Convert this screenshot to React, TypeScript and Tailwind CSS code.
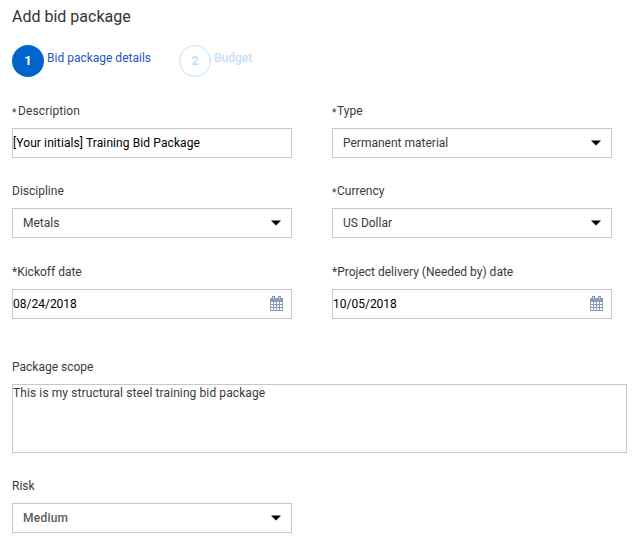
import React from 'react';

function Arrow() {
  return (
    <svg className="absolute right-[10px] top-[11px]" width="10" height="6" viewBox="0 0 10 6">
      <path d="M0 0.5h10L5 5.5z" fill="#000" />
    </svg>
  );
}

function Calendar() {
  return (
    <svg className="mb-px" width="13" height="15" viewBox="0 0 13 15" shapeRendering="crispEdges">
      <path d="M0 2h13v13h-13z" fill="#8b9dba" />
      <path d="M2 0h3v4h-3zM8 0h3v4h-3z" fill="#8b9dba" />
      <path d="M3 1h1v2h-1zM9 1h1v2h-1z" fill="#c9d2e1" />
      <path
        d="M1 6h2v2h-2zM4 6h2v2h-2zM7 6h2v2h-2zM10 6h2v2h-2zM1 9h2v2h-2zM4 9h2v2h-2zM7 9h2v2h-2zM10 9h2v2h-2zM1 12h2v2h-2zM4 12h2v2h-2zM7 12h2v2h-2zM10 12h2v2h-2z"
        fill="#fff"
      />
    </svg>
  );
}

function Label({ text, required }: { text: string; required?: boolean }) {
  return (
    <div className="flex h-[17px] text-[12px] leading-[17px] text-[#3b3b3b]">
      {required && <span className="w-[5px] pt-px text-[10px]">*</span>}
      <span>{text}</span>
    </div>
  );
}

function Select({ label, value, required, strong }: { label: string; value: string; required?: boolean; strong?: boolean }) {
  return (
    <div className="w-[280px] pt-px">
      <Label text={label} required={required} />
      <div className="relative mt-2 h-[30px] border border-[#c8c8c8] pl-[10px] text-[12px] leading-[28px] text-[#3b3b3b]">
        {strong ? <span className="font-medium tracking-[0.02em] text-[#5c5c5c]">{value}</span> : value}
        <Arrow />
      </div>
    </div>
  );
}

function DateField({ label, value }: { label: string; value: string }) {
  return (
    <div className="w-[280px] pt-[2px]">
      <div className="h-[17px] text-[12px] leading-[17px] text-[#3b3b3b]">*{label}</div>
      <div className="mt-2 flex h-[30px] items-center justify-between border border-[#c8c8c8] pr-[8px] text-[12px] text-black">
        <span>{value}</span>
        <Calendar />
      </div>
    </div>
  );
}

export default function App() {
  return (
    <main className="h-[544px] w-[638px] overflow-hidden bg-white pl-3 pt-[7px] font-[Roboto,sans-serif]">
      <h1 className="text-[16px] leading-[20px] text-[#333]">Add bid package</h1>

      {/* Wizard steps */}
      <div className="mt-[18px] flex h-8">
        <div className="flex h-8 w-8 items-center justify-center rounded-full bg-[#0066cc] text-[13px] font-bold text-white">1</div>
        <div className="ml-[3px] mt-[5px] w-[132px] text-[12px] leading-[17px] text-[#2458c8]">Bid package details</div>
        <div className="flex h-8 w-8 items-center justify-center rounded-full border border-[#c5e0f8] text-[13px] font-bold text-[#c5e0f8]">2</div>
        <div className="ml-[3px] mt-[5px] text-[12px] font-medium leading-[17px] text-[#c5e0f8]">Budget</div>
      </div>

      <div className="mt-[25px] grid grid-cols-[320px_280px] gap-y-6">
        <div className="w-[280px] pt-px">
          <div className="flex h-[17px] text-[12px] leading-[17px] text-[#3b3b3b]">
            <span className="w-[6px] pt-px text-[10px]">*</span>
            <span className="tracking-[0.01em]">Description</span>
          </div>
          <div className="mt-2 h-[30px] border border-[#c8c8c8] text-[12px] leading-[28px] tracking-[0.1px] text-black">[Your initials] Training Bid Package</div>
        </div>
        <Select label="Type" value="Permanent material" required />
        <Select label="Discipline" value="Metals" />
        <Select label="Currency" value="US Dollar" required />
        <DateField label="Kickoff date" value="08/24/2018" />
        <DateField label="Project delivery (Needed by) date" value="10/05/2018" />
      </div>

      <div className="mt-[39px] pt-px">
        <Label text="Package scope" />
        <div className="mt-2 h-[69px] w-[615px] border border-[#c8c8c8] text-[12px] leading-[17px] tracking-[0.1px] text-[#3b3b3b]">This is my structural steel training bid package</div>
      </div>

      <div className="mt-6">
        <Select label="Risk" value="Medium" strong />
      </div>
    </main>
  );
}
